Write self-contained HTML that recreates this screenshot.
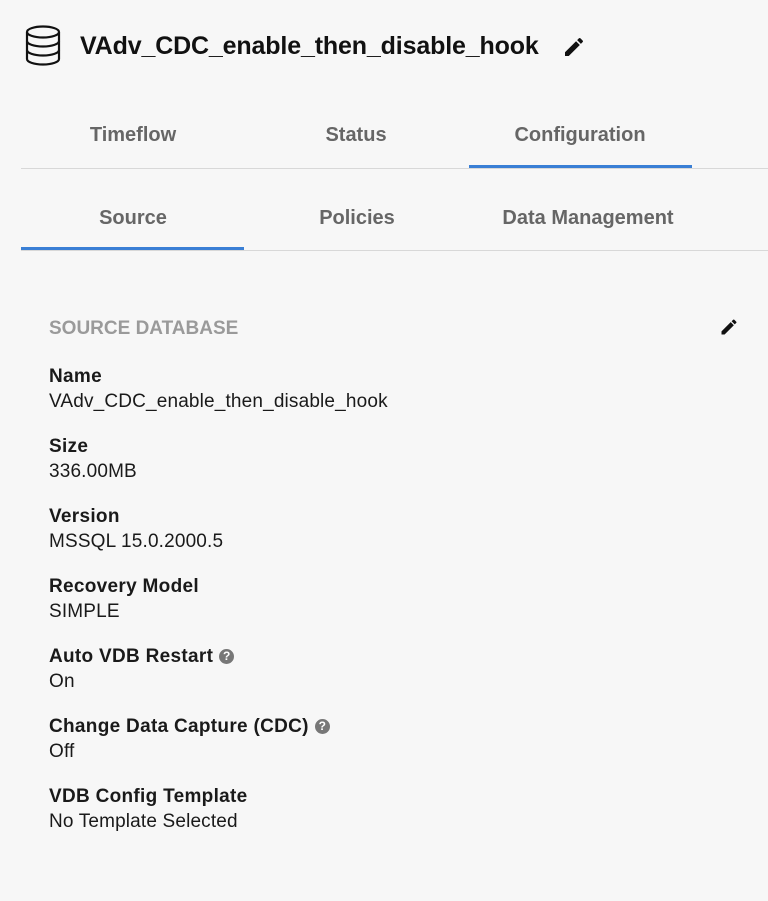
<!DOCTYPE html>
<html><head><style>
body{margin:0;width:768px;height:901px;background:#f7f7f7;font-family:"Liberation Sans",Arial,sans-serif;position:relative;overflow:hidden;color:#1a1a1a}
.a{position:absolute;white-space:nowrap}
.tab{position:absolute;font-size:20px;font-weight:bold;color:#666;transform:translateX(-50%)}
.lbl{position:absolute;left:49px;font-size:19px;font-weight:bold;color:#1a1a1a;letter-spacing:0.3px}
.val{position:absolute;left:49px;font-size:19px;color:#1a1a1a;letter-spacing:0.16px}
.q{display:inline-block;width:15px;height:15px;border-radius:50%;background:#777;color:#fff;font-size:12px;text-align:center;line-height:15px;vertical-align:2px;margin-left:6px;letter-spacing:0}
</style></head><body>
<svg class="a" style="left:25px;top:25px" width="36" height="41" viewBox="0 0 36 41" fill="none" stroke="#111" stroke-width="2.2">
<ellipse cx="18" cy="7" rx="16" ry="5.5"/><path d="M2 7v27c0 3 7 5.5 16 5.5s16-2.5 16-5.5V7"/><path d="M2 16c0 3 7 5.5 16 5.5s16-2.5 16-5.5"/><path d="M2 25c0 3 7 5.5 16 5.5s16-2.5 16-5.5"/></svg>
<div class="a" style="left:80px;top:32px;font-size:25px;font-weight:bold;color:#111;letter-spacing:-0.15px">VAdv_CDC_enable_then_disable_hook</div>
<svg class="a" style="left:562px;top:35px" width="24" height="24" viewBox="0 0 24 24"><path fill="#111" d="M3 17.25V21h3.75L17.81 9.94l-3.75-3.75L3 17.25zM20.71 7.04a1 1 0 000-1.41l-2.34-2.34a1 1 0 00-1.41 0l-1.83 1.83 3.75 3.75 1.83-1.83z"/></svg>
<div class="tab" style="left:133px;top:124px">Timeflow</div>
<div class="tab" style="left:356px;top:124px">Status</div>
<div class="tab" style="left:580px;top:124px">Configuration</div>
<div class="a" style="left:21px;top:168px;width:747px;height:1px;background:#d8d8d8"></div>
<div class="a" style="left:469px;top:165px;width:223px;height:3px;background:#3a7fd5"></div>
<div class="tab" style="left:133px;top:207px">Source</div>
<div class="tab" style="left:357px;top:207px">Policies</div>
<div class="tab" style="left:588px;top:207px">Data Management</div>
<div class="a" style="left:21px;top:250px;width:747px;height:1px;background:#d8d8d8"></div>
<div class="a" style="left:21px;top:247px;width:223px;height:3px;background:#3a7fd5"></div>
<div class="a" style="left:49px;top:318px;font-size:19px;font-weight:bold;color:#9a9a9a">SOURCE DATABASE</div>
<svg class="a" style="left:719px;top:317px" width="20" height="20" viewBox="0 0 24 24"><path fill="#111" d="M3 17.25V21h3.75L17.81 9.94l-3.75-3.75L3 17.25zM20.71 7.04a1 1 0 000-1.41l-2.34-2.34a1 1 0 00-1.41 0l-1.83 1.83 3.75 3.75 1.83-1.83z"/></svg>
<div class="lbl" style="top:366px">Name</div><div class="val" style="top:391px">VAdv_CDC_enable_then_disable_hook</div>
<div class="lbl" style="top:436px">Size</div><div class="val" style="top:461px">336.00MB</div>
<div class="lbl" style="top:506px">Version</div><div class="val" style="top:531px">MSSQL 15.0.2000.5</div>
<div class="lbl" style="top:576px">Recovery Model</div><div class="val" style="top:601px">SIMPLE</div>
<div class="lbl" style="top:646px">Auto VDB Restart<span class="q">?</span></div><div class="val" style="top:671px">On</div>
<div class="lbl" style="top:716px">Change Data Capture (CDC)<span class="q">?</span></div><div class="val" style="top:741px">Off</div>
<div class="lbl" style="top:786px">VDB Config Template</div><div class="val" style="top:811px">No Template Selected</div>
</body></html>
